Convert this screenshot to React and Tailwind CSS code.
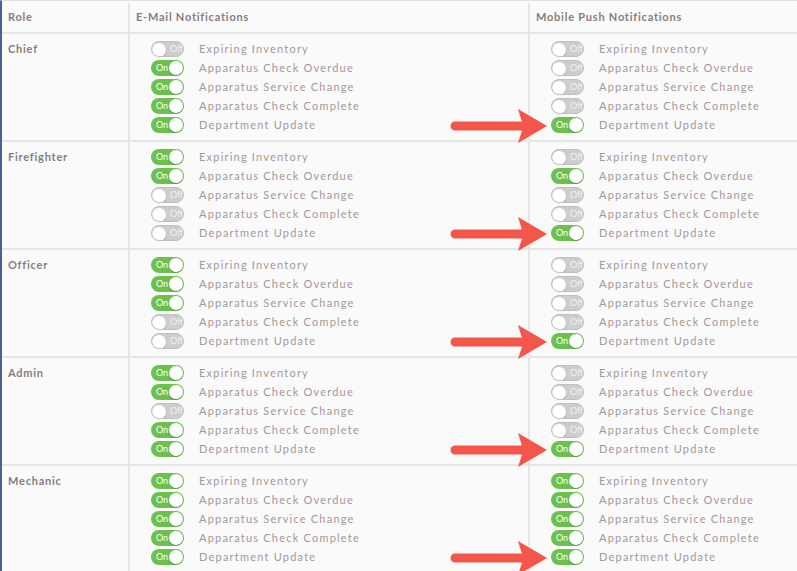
const labels = [
  'Expiring Inventory',
  'Apparatus Check Overdue',
  'Apparatus Service Change',
  'Apparatus Check Complete',
  'Department Update',
]

const roles = [
  { name: 'Chief', email: [0, 1, 1, 1, 1], mobile: [0, 0, 0, 0, 1] },
  { name: 'Firefighter', email: [1, 1, 0, 0, 0], mobile: [0, 1, 0, 0, 1] },
  { name: 'Officer', email: [1, 1, 1, 0, 0], mobile: [0, 0, 0, 0, 1] },
  { name: 'Admin', email: [1, 1, 0, 1, 1], mobile: [0, 0, 0, 0, 1] },
  { name: 'Mechanic', email: [1, 1, 1, 1, 1], mobile: [1, 1, 1, 1, 1] },
]

function Toggle({ on }) {
  return (
    <div
      className={`relative w-[33px] h-[16px] rounded-full overflow-hidden shrink-0 ${
        on ? 'bg-[#6cc14e]' : 'bg-[#cdcdcd] border border-[#c0c0c0]'
      }`}
    >
      {on ? (
        <span className="absolute left-[5px] top-0 leading-[16px] text-[9px] text-white">On</span>
      ) : (
        <span className="absolute left-[18px] top-0 leading-[14px] text-[9px] text-[#f2f2f2]">Off</span>
      )}
      <span
        className={`absolute top-[1px] w-[14px] h-[14px] rounded-full bg-white shadow-[0_1px_1px_rgba(0,0,0,0.25)] ${
          on ? 'right-[1px]' : 'left-0 top-0'
        }`}
      />
    </div>
  )
}

function Arrow() {
  return (
    <svg
      className="absolute left-[-101px] top-[-16px]"
      width="98"
      height="34"
      viewBox="0 0 98 34"
    >
      <path d="M5 12.5 H72 V13 L68 0 L97 17 L68 34 L72 21.5 H5 A4.5 4.5 0 0 1 5 12.5 Z" fill="#f4564a" />
    </svg>
  )
}

function ToggleList({ values, arrow }) {
  return (
    <div className="flex flex-col gap-[3px] pl-[21px] pt-[7px]">
      {labels.map((label, i) => (
        <div key={label} className="relative flex items-center h-[16px]">
          {arrow && i === 4 && (
            <div className="absolute left-0 top-1/2">
              <Arrow />
            </div>
          )}
          <Toggle on={values[i] === 1} />
          <span className="ml-[15px] text-[11px] tracking-[0.11em] text-[#a39898]">{label}</span>
        </div>
      ))}
    </div>
  )
}

export default function App() {
  return (
    <div
      className="w-[797px] h-[571px] overflow-hidden bg-[#fafafa] border-l-2 border-[#4a6296] border-t border-t-[#e2e2e2]"
      style={{ fontFamily: 'Lato, "DejaVu Sans", sans-serif' }}
    >
      <div className="flex h-[33px] pt-[2px] border-b-2 border-[#e6e6e6] text-[11px] font-bold tracking-[0.07em] text-[#877c7c]">
        <div className="w-[128px] border-r-2 border-[#e6e6e6] pl-[6px] flex items-center">Role</div>
        <div className="w-[400px] border-r-2 border-[#e6e6e6] pl-[6px] flex items-center">E-Mail Notifications</div>
        <div className="flex-1 pl-[6px] flex items-center">Mobile Push Notifications</div>
      </div>
      {roles.map((role) => (
        <div key={role.name} className="flex h-[108px] border-b-2 border-[#e6e6e6]">
          <div className="w-[128px] border-r-2 border-[#e6e6e6] pl-[6px] pt-[7px]">
            <div className="h-[16px] flex items-center text-[11px] font-bold tracking-[0.07em] text-[#877c7c]">
              {role.name}
            </div>
          </div>
          <div className="w-[400px] border-r-2 border-[#e6e6e6]">
            <ToggleList values={role.email} />
          </div>
          <div className="flex-1">
            <ToggleList values={role.mobile} arrow />
          </div>
        </div>
      ))}
    </div>
  )
}
